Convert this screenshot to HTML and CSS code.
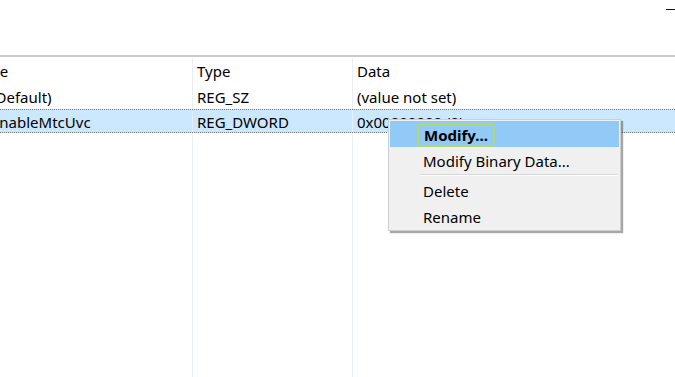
FILE: index.html
```html
<!DOCTYPE html>
<html lang="en">
  <head>
    <meta charset="UTF-8" />
    <title>Registry Editor</title>
    <link rel="stylesheet" href="styles.css">
  </head>
  <body>
    <div class="window">
      <div class="titlebar">
        <span class="minimize"></span>
      </div>
      <div class="divider"></div>

      <div class="list">
        <div class="row header">
          <div class="cell name"><span class="name-text">Name</span></div>
          <div class="cell type">Type</div>
          <div class="cell data">Data</div>
        </div>
        <div class="row">
          <div class="cell name"><span class="name-text">(Default)</span></div>
          <div class="cell type">REG_SZ</div>
          <div class="cell data">(value not set)</div>
        </div>
        <div class="row selected">
          <div class="cell name"><span class="name-text">EnableMtcUvc</span></div>
          <div class="cell type">REG_DWORD</div>
          <div class="cell data">0x00000000 (0)</div>
        </div>
        <div class="row filler">
          <div class="cell name"></div>
          <div class="cell type"></div>
          <div class="cell data"></div>
        </div>
      </div>

      <div class="context-menu">
        <div class="menu-item active"><span class="focus">Modify...</span></div>
        <div class="menu-item">Modify Binary Data...</div>
        <div class="menu-sep"></div>
        <div class="menu-item">Delete</div>
        <div class="menu-item">Rename</div>
      </div>
    </div>
  </body>
</html>
```

FILE: styles.css
```css
body {
  margin: 0;
  background-color: white;
  font-family: "Noto Sans", "Open Sans", sans-serif;
  font-size: 15px;
  color: #000;
  overflow: hidden;
}
.window {
  position: relative;
  display: flex;
  flex-direction: column;
  height: 377px;
  width: 675px;
  overflow: hidden;
}
.titlebar {
  height: 55px;
  display: flex;
  justify-content: flex-end;
}
.minimize {
  width: 9px;
  height: 1px;
  margin-top: 9px;
  background-color: #111;
}
.divider {
  height: 2px;
  background-color: #cbcbcb;
}
.list {
  flex: 1;
  display: flex;
  flex-direction: column;
}
.row {
  display: flex;
  height: 25px;
  align-items: center;
  box-sizing: border-box;
  white-space: nowrap;
}
.header {
  height: 27px;
  padding-top: 1px;
}
.selected {
  height: 24px;
  padding-top: 1px;
  background-color: #cce8ff;
  border-top: 1px dotted #777;
  border-bottom: 1px dotted #777;
}
.filler {
  flex: 1;
}
.cell {
  box-sizing: border-box;
  height: 100%;
  display: flex;
  align-items: center;
  overflow: hidden;
}
.name {
  width: 193px;
  border-right: 1px solid #e9eff6;
}
.name-text {
  margin-left: -9px;
}
.header .name-text {
  margin-left: -34px;
}
.type {
  width: 160px;
  padding-left: 4px;
  border-right: 1px solid #e9eff6;
}
.data {
  flex: 1;
  padding-left: 4px;
}
.context-menu {
  position: absolute;
  left: 388px;
  top: 119px;
  width: 233px;
  box-sizing: border-box;
  padding: 1px;
  background-color: #f0f0f0;
  border: 1px solid #cfcfcf;
  box-shadow: 2px 2px 1px rgba(0, 0, 0, 0.35);
}
.menu-item {
  height: 26px;
  box-sizing: border-box;
  padding-top: 1px;
  display: flex;
  align-items: center;
  padding-left: 33px;
}
.menu-item.active {
  background-color: #91c9f7;
  font-weight: bold;
}
.focus {
  margin-left: -6px;
  padding: 0 5px;
  border: 2px solid #b2d86c;
  border-radius: 5px;
}
.menu-sep {
  height: 1px;
  margin: 1px 2px 1px 30px;
  background-color: #d7d7d7;
  border-bottom: 1px solid #fff;
}
```
